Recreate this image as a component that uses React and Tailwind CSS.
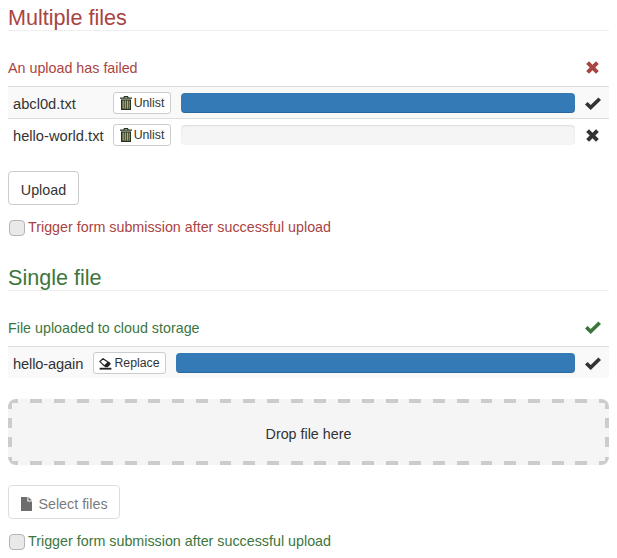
import React from 'react';

const TrashIcon = () => (
  <svg viewBox="0 0 12 14" className="w-3 h-[14px] mr-[2px] mt-[-2px] shrink-0" fill="#26301a">
    <path d="M4 0h4l.6 1.6H12v1.2H0V1.6h3.4zM4.8 0.9l-.2.7h2.8l-.2-.7z" fillRule="evenodd" />
    <path d="M1 3.4h10V14H1z" />
    <path d="M2.5 4.6h1.3v8.2H2.5z M4.6 4.6h1.3v8.2H4.6z M6.7 4.6h1.3v8.2H6.7z M8.6 4.6h1.1v8.2H8.6z" fill="#a8ab80" />
  </svg>
);

const EraseIcon = () => (
  <svg viewBox="0 0 13 12" className="w-[13px] h-3 mr-[2px] shrink-0" fill="#222">
    <path d="M4 0.7L0.9 3.6l4.2 4h2.5l3-2.6z" fill="none" stroke="#222" strokeWidth="1.2" />
    <path d="M5 7.6l3.8-3.8 3.2 2-3.2 3.4H6z" />
    <path d="M0.6 9.8h11.8v1.8H0.6z" />
  </svg>
);

const OkIcon = () => (
  <svg viewBox="0 0 16 13" className="w-4 h-[13px] ml-px" fill="currentColor">
    <path d="M0 7.4L2.6 4.9 5.7 8 13.4 0.4 16 2.9 5.7 13z" />
  </svg>
);

const RemoveIcon = () => (
  <svg viewBox="0 0 13 13" className="w-[13px] h-[13px]" fill="currentColor">
    <path d="M3 0.2L6.5 3.7 10 0.2 12.8 3 9.3 6.5 12.8 10 10 12.8 6.5 9.3 3 12.8 0.2 10 3.7 6.5 0.2 3z" />
  </svg>
);

const FileIcon = () => (
  <svg viewBox="0 0 11 14" className="w-[11px] h-[14px] ml-px mr-[6px] shrink-0" fill="#222">
    <path d="M0 0h6.4v4.6H11V14H0z" />
    <path d="M7.4 0L11 3.6H7.4z" />
  </svg>
);

const SmallButton = ({ icon, label, width }) => (
  <button className={`flex items-center justify-center h-[22px] pt-[2px] ${width} border border-[#ccc] rounded-[3px] bg-white text-[12.3px] text-[#333] shrink-0`}>
    {icon}
    {label}
  </button>
);

const FileRow = ({ name, nameClass, icon, label, buttonWidth, filled, status, striped }) => (
  <div className={`flex items-center h-8 pl-[5px] border-t border-[#ddd] ${striped ? 'bg-[#f9f9f9]' : ''}`}>
    <span className={`${nameClass} pt-[4px] text-[14.7px] text-[#333] whitespace-nowrap shrink-0`}>{name}</span>
    <SmallButton icon={icon} label={label} width={buttonWidth} />
    <div
      className={`flex-1 h-5 ml-[10px] rounded ${
        filled ? 'bg-[#337ab7] shadow-[inset_0_-1px_0_rgba(0,0,0,0.15)]' : 'bg-[#f5f5f5] shadow-[inset_0_1px_2px_rgba(0,0,0,0.1)]'
      }`}
    />
    <div className="w-[34px] pt-px flex justify-center text-[#333]">{status}</div>
  </div>
);

const Heading = ({ children, color }) => (
  <h3 className={`text-[21.6px] leading-[23px] h-[31px] pt-[6px] border-b border-[#eee] ${color}`}>{children}</h3>
);

const TriggerCheck = ({ color }) => (
  <label className={`flex items-center h-4 text-[14.3px] ${color}`}>
    <span className="w-4 h-4 ml-px mr-[3px] rounded-[4px] border border-[#b5b5b5] bg-[#e9e9e9] shrink-0" />
    Trigger form submission after successful upload
  </label>
);

const StatusLine = ({ text, color, icon }) => (
  <div className={`flex items-center justify-between h-[55px] pt-[19px] text-[14.3px] ${color}`}>
    <span className="pt-px">{text}</span>
    <div className="w-[34px] flex justify-center mt-[-1px]">{icon}</div>
  </div>
);

const App = () => {
  return (
    <div className="px-2 w-[617px] h-[558px] overflow-hidden bg-white font-['Liberation_Sans',Arial,sans-serif]">
      {/* Multiple files */}
      <Heading color="text-[#a94442]">Multiple files</Heading>
      <StatusLine text="An upload has failed" color="text-[#a94442]" icon={<RemoveIcon />} />
      <FileRow
        name="abcl0d.txt"
        nameClass="w-[100px]"
        icon={<TrashIcon />}
        label="Unlist"
        buttonWidth="w-[58px]"
        filled
        striped
        status={<OkIcon />}
      />
      <FileRow
        name="hello-world.txt"
        nameClass="w-[100px]"
        icon={<TrashIcon />}
        label="Unlist"
        buttonWidth="w-[58px]"
        status={<RemoveIcon />}
      />
      <button className="block mt-[21px] w-[71px] h-[34px] pt-[6px] border border-[#ccc] rounded bg-white text-[14.3px] text-[#333]">Upload</button>
      <div className="mt-[15px]">
        <TriggerCheck color="text-[#a94442]" />
      </div>

      {/* Single file */}
      <div className="mt-[24px]">
        <Heading color="text-[#3c763d]">Single file</Heading>
      </div>
      <StatusLine text="File uploaded to cloud storage" color="text-[#3c763d]" icon={<OkIcon />} />
      <FileRow
        name="hello-again"
        nameClass="w-[80px] tracking-[-0.15px]"
        icon={<EraseIcon />}
        label="Replace"
        buttonWidth="w-[73px]"
        filled
        striped
        status={<OkIcon />}
      />
      <div className="flex items-center justify-center h-[66px] mt-[21px] pt-[6px] rounded-lg bg-[#f5f5f5] bg-no-repeat text-[14.3px] text-[#333] [background-image:repeating-linear-gradient(90deg,#ccc_-1.86px,#ccc_10px,transparent_10px,transparent_21.86px),repeating-linear-gradient(90deg,#ccc_-1.86px,#ccc_10px,transparent_10px,transparent_21.86px),repeating-linear-gradient(180deg,#ccc_0,#ccc_9.6px,transparent_9.6px,transparent_19.2px),repeating-linear-gradient(180deg,#ccc_0,#ccc_9.6px,transparent_9.6px,transparent_19.2px)] [background-size:100%_4px,100%_4px,4px_100%,4px_100%] [background-position:0_0,0_100%,0_0,100%_0]">
        Drop file here
      </div>
      <button className="flex items-center justify-center mt-5 w-[112px] h-[34px] pt-[6px] border border-[#ccc] rounded bg-white text-[14.3px] text-[#333] opacity-65">
        <span className="mt-[-2px]"><FileIcon /></span>
        Select files
      </button>
      <div className="mt-[15px]">
        <TriggerCheck color="text-[#3c763d]" />
      </div>
    </div>
  );
};

export default App;
